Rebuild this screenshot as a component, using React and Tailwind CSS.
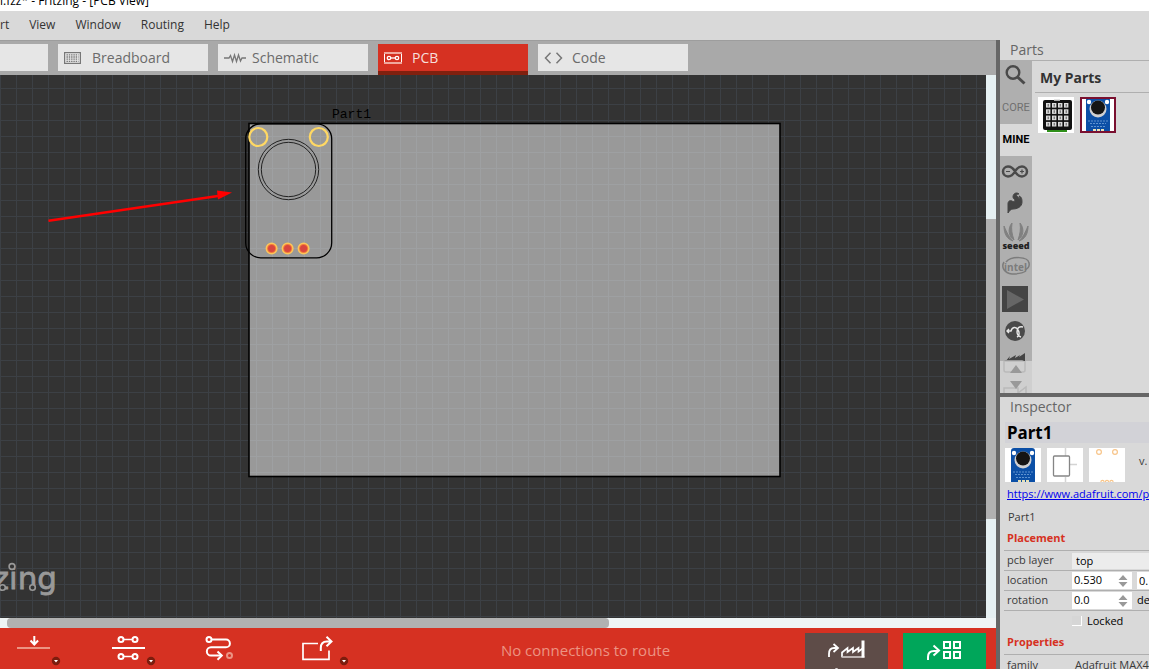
import React, { useState } from "react";

const menus = ["rt", "View", "Window", "Routing", "Help"];

const BreadboardIcon = () => (
  <svg width="17" height="12" viewBox="0 0 17 12" fill="none" stroke="#777" strokeWidth="1">
    <rect x="0.5" y="0.5" width="16" height="11" strokeWidth="1.4" />
    <path d="M2.5 2.8h12M2.5 5h12M2.5 7.2h12M2.5 9.4h12" strokeDasharray="1.4 0.9" strokeWidth="1.3" />
  </svg>
);

const SchematicIcon = () => (
  <svg width="22" height="12" viewBox="0 0 22 12" fill="none" stroke="#777" strokeWidth="1.3">
    <path d="M0 6h5l1.500-2.500 2 6 2-6.500 2 6.500 2-6.500 2 6 1.500-3H22" />
  </svg>
);

const PcbIcon = () => (
  <svg width="18" height="12" viewBox="0 0 18 12" fill="none" stroke="#fff">
    <path d="M0.500 0v12M17.500 0v12" strokeWidth="1" />
    <path d="M0 1h18M0 11h18" stroke="#f0a79d" strokeWidth="2" />
    <circle cx="5" cy="6" r="1.700" strokeWidth="1.300" />
    <circle cx="13" cy="6" r="1.700" strokeWidth="1.300" />
    <path d="M7 6h4" strokeWidth="1.300" />
  </svg>
);

const CodeIcon = () => (
  <svg width="19" height="12" viewBox="0 0 19 12" fill="none" stroke="#777" strokeWidth="1.500">
    <path d="M6.500 0.700L1.500 6l5 5.300M12.500 0.700L17.500 6l-5 5.300" />
  </svg>
);

const tabs = [
  { name: "Breadboard", icon: <BreadboardIcon /> },
  { name: "Schematic", icon: <SchematicIcon /> },
  { name: "PCB", icon: <PcbIcon /> },
  { name: "Code", icon: <CodeIcon /> },
];

const Caret = ({ x }) => (
  <>
    <circle cx={x} cy="33" r="4.200" fill="#7c1d0e" stroke="none" />
    <path d={`M${x - 2} 32h4l-2 2.500z`} fill="#fff" stroke="none" />
  </>
);

const tools = [
  {
    name: "View from above",
    icon: (
      <>
        <path d="M0 20h33" stroke="#ec9483" />
        <path d="M17.300 8v8M13.500 12.500l3.800 4 3.800-4" />
        <Caret x={39} />
      </>
    ),
  },
  {
    name: "Both layers",
    icon: (
      <>
        <path d="M0 20h33" />
        <path d="M12 11.500h8M12 28.500h8" strokeWidth="1.600" />
        <circle cx="9" cy="11.500" r="2.500" />
        <circle cx="23" cy="11.500" r="2.500" />
        <circle cx="9" cy="28.500" r="2.500" />
        <circle cx="23" cy="28.500" r="2.500" />
        <Caret x={39} />
      </>
    ),
  },
  {
    name: "Autoroute",
    icon: (
      <>
        <circle cx="2" cy="11.500" r="2.500" />
        <path d="M4.500 11.500h14.500a3.900 3.900 0 0 1 0 7.800H4a4.100 4.100 0 0 0 0 8.300h10.500" />
        <path d="M10.500 23.500l4.300 4.100-4.300 4.100" />
        <circle cx="22.500" cy="27.600" r="2.500" stroke="#ec9483" />
      </>
    ),
  },
  {
    name: "Export for PCB",
    icon: (
      <>
        <path d="M16 15.500H1v15.800h26V22.500" strokeWidth="1.700" />
        <path d="M18.800 23v-3c0-4 2-6.500 6-6.500h4.500M24.500 8.800l5 4.700-5 4.700" />
        <Caret x={42} />
      </>
    ),
  },
];

const MicPart = () => (
  <svg width="36" height="36" viewBox="0 0 36 36">
    <rect x="6" y="0" width="24" height="36" rx="3" fill="#0b4fa6" />
    <circle cx="9" cy="5" r="2.200" fill="#fff" />
    <circle cx="27" cy="5" r="2.200" fill="#fff" />
    <circle cx="18" cy="12" r="8.500" fill="#cfd0d2" />
    <circle cx="18" cy="10.500" r="7" fill="#151515" />
    <path d="M8 24h20M10 26.500h16M11 29.500h14" stroke="#5e92cf" strokeWidth="1" strokeDasharray="2 1" />
    <path d="M13 33h3M17 33h3M21 33h3" stroke="#e8e2b8" strokeWidth="2" />
  </svg>
);

const keys = [0, 1, 2, 3];

const KeypadPart = () => (
  <svg width="36" height="36" viewBox="0 0 36 36">
    <path d="M9 33.500h20" stroke="#2f8f1a" strokeWidth="3" />
    <rect x="5" y="3" width="29" height="30" rx="2" fill="#111" />
    <path d="M16 3h6" stroke="#ddd" strokeWidth="1.500" />
    {keys.map((row) =>
      keys.map((col) => (
        <g key={`${row}-${col}`}>
          <rect x={8 + col * 6} y={6 + row * 6.3} width="4.400" height="4.600" fill="#ddd" />
          <path d={`M${10.2 + col * 6} ${7 + row * 6.3}v2.600`} stroke="#555" />
        </g>
      ))
    )}
  </svg>
);

const SchematicPart = () => (
  <svg width="36" height="34" viewBox="0 0 36 34" fill="none" stroke="#d4d4d4">
    <path d="M18.500 0v8M18.500 29v5M23 16.500h7" strokeWidth="1.500" />
    <rect x="6.500" y="8" width="16" height="20" rx="1" stroke="#858585" strokeWidth="1.300" />
  </svg>
);

const PcbPart = () => (
  <svg width="36" height="34" viewBox="0 0 36 34" fill="none" stroke="#f8c58a" strokeWidth="1.200">
    <circle cx="10" cy="4" r="2.400" />
    <circle cx="26" cy="4" r="2.400" />
    <circle cx="13.500" cy="34" r="1.600" />
    <circle cx="18" cy="34" r="1.600" />
    <circle cx="22.500" cy="34" r="1.600" />
  </svg>
);

const BinIcon = ({ label, children }) => (
  <button aria-label={label} className="block h-8 w-8 shrink-0">
    <svg width="32" height="32" viewBox="0 0 32 32" fill="none">
      {children}
    </svg>
  </button>
);

const Bins = () => (
  <div className="relative flex w-8 shrink-0 flex-col overflow-hidden bg-[#afafaf]">
    <button aria-label="Search" className="h-[31px] w-8 shrink-0">
      <svg width="32" height="31" viewBox="0 0 32 31" fill="none" stroke="#4a4a4a">
        <circle cx="13" cy="11.500" r="6.300" strokeWidth="2.400" />
        <path d="M17.500 16l7 6.500" strokeWidth="3" />
      </svg>
    </button>
    <button className="flex h-8 w-8 shrink-0 items-center justify-center font-['Roboto',sans-serif] text-[11px] text-[#707070]">
      CORE
    </button>
    <button className="flex h-8 w-8 shrink-0 items-center justify-center bg-[#d9d9d9] font-['Roboto',sans-serif] text-[11px] font-bold text-black">
      MINE
    </button>
    <BinIcon label="Arduino">
      <path
        d="M15 15.500c-2-3.500-4-4.900-7-4.900a5 4.900 0 0 0 0 9.800c3 0 5-1.400 7-4.900s4-4.900 7-4.900a5 4.900 0 0 1 0 9.800c-3 0-5-1.400-7-4.900z"
        stroke="#4a4a4a"
        strokeWidth="2.500"
      />
      <path d="M6 15.500h4M20 15.500h4M22 13.500v4" stroke="#4a4a4a" strokeWidth="1.200" />
    </BinIcon>
    <BinIcon label="SparkFun">
      <path
        d="M8 25V16c0-3 2-4 4-3 1 1 3 1 3-1 0-1-2-1-2-3 0-4 4-5 6-3-3 0-3 2-1 3l1 2c1-1 1-1 0-3 3 1 3 4 3 6 0 5-5 7-9 7-2 0-3 1-5 4z"
        fill="#444"
        stroke="#444"
      />
    </BinIcon>
    <BinIcon label="Seeed">
      <path
        d="M4 6c0 8 3 13 9 15-4-4-6-8-9-15zM28 6c0 8-3 13-9 15 4-4 6-8 9-15zM12 3c-5 6-3 14 2 17-2-6-3-10-2-17zM20 3c5 6 3 14-2 17 2-6 3-10 2-17z"
        fill="#808080"
        stroke="#808080"
      />
      <text x="16" y="29" textAnchor="middle" fontSize="9" fontWeight="800" fontFamily="Open Sans, sans-serif" fill="#222">
        seeed
      </text>
    </BinIcon>
    <BinIcon label="Intel">
      <path d="M6 10c5-6 22-6 23 1 1 4-2 6-4 7M4 10c-3 5 0 11 8 12 6 0 11-1 14-3" stroke="#7c7c7c" strokeWidth="1.500" />
      <text x="15.500" y="19" textAnchor="middle" fontSize="10" fontWeight="700" fontFamily="Open Sans, sans-serif" fill="#7c7c7c">
        intel
      </text>
    </BinIcon>
    <BinIcon label="Picaxe">
      <rect x="2" y="2" width="26" height="26" fill="#444" />
      <path d="M7 6l17 9.500L7 25z" fill="#666" />
    </BinIcon>
    <BinIcon label="Parallax">
      <circle cx="15" cy="15" r="10" fill="#4a4a4a" />
      <path
        d="M7 15h4c1-4 5-5 7-1 2 3 1 6-1 7M23 11c-4-1-6 1-6 5 0 3 1 4 4 5M9 13l-2 2 2 2"
        stroke="#e8e8e8"
        strokeWidth="1.400"
      />
    </BinIcon>
    <BinIcon label="Factory">
      <path d="M5 14l5-6-1 3 7-4-1 3 5-3-1 2 6-4v9H5z" fill="#444" />
      <rect x="4" y="12" width="20" height="12" rx="2" fill="#999" />
    </BinIcon>
    <div className="absolute inset-x-0 bottom-0 flex flex-col items-center bg-[#cfcfcf]">
      <svg width="32" height="32" viewBox="0 0 32 32" fill="none">
        <path d="M4 0h21v9a2 2 0 0 1-2 2H6a2 2 0 0 1-2-2zM4 32v-5h14v5M18 32l8-6v6" stroke="#bababa" strokeWidth="1.500" />
        <path d="M16 4l6 8H10zM10 20h12l-6 8z" fill="#999" />
      </svg>
    </div>
  </div>
);

const Spinner = () => (
  <svg width="10" height="12" viewBox="0 0 10 12" className="mr-1 shrink-0">
    <path d="M5 0l4.500 5h-9zM0.500 7h9L5 12z" fill="#999" />
  </svg>
);

const Inspector = () => {
  const [location, setLocation] = useState("0.530");
  const [locationY, setLocationY] = useState("0.");
  const [rotation, setRotation] = useState("0.0");
  const [locked, setLocked] = useState(false);

  return (
    <div className="min-h-0 flex-1 overflow-hidden whitespace-nowrap pl-1 text-[11px] text-[#3a3a3a]">
      <h2 className="pl-[6px] text-sm leading-5 text-[#666]">Inspector</h2>
      <div className="ml-px mt-[5px] bg-[#d2d2d7] pl-[2px] font-['Noto_Sans',sans-serif] text-[17px] font-bold leading-[21px] text-black">
        Part1
      </div>
      <div className="ml-px mt-[5px] flex items-center gap-[6px]">
        <div className="h-[34px] w-9 shrink-0 overflow-hidden bg-white">
          <MicPart />
        </div>
        <div className="h-[34px] w-9 shrink-0 bg-white">
          <SchematicPart />
        </div>
        <div className="h-[34px] w-9 shrink-0 bg-white">
          <PcbPart />
        </div>
        <span className="pb-2 pl-2">v.</span>
      </div>
      <a href="#adafruit" className="mt-1 block pl-[3px] leading-4 text-[#0000ee] underline">
        https://www.adafruit.com/products/1713
      </a>
      <p className="mt-[7px] pl-1 leading-4">Part1</p>
      <h3 className="mt-[3px] border-b border-[#afafaf] pb-[2px] pl-[3px] font-bold leading-5 text-[#d63122]">
        Placement
      </h3>
      <div className="flex h-5 items-center border-b border-[#afafaf] pl-[3px]">
        <label htmlFor="layer" className="w-[65px] shrink-0">pcb layer</label>
        <select id="layer" className="h-4 min-w-0 flex-1 appearance-none bg-[#ececec] pl-1 leading-4 text-black">
          <option>top</option>
        </select>
      </div>
      <div className="flex h-5 items-center border-b border-[#afafaf] pl-[3px]">
        <label htmlFor="location" className="w-[65px] shrink-0">location</label>
        <div className="flex h-[17px] w-[60px] shrink-0 items-center bg-white">
          <input
            id="location"
            value={location}
            onChange={(e) => setLocation(e.target.value)}
            className="min-w-0 flex-1 pl-[2px] text-[11px] text-black outline-none"
          />
          <Spinner />
        </div>
        <input
          aria-label="location y"
          value={locationY}
          onChange={(e) => setLocationY(e.target.value)}
          className="ml-[5px] h-[17px] min-w-0 flex-1 bg-white pl-[2px] text-[11px] text-black outline-none"
        />
      </div>
      <div className="flex h-5 items-center border-b border-[#afafaf] pl-[3px]">
        <label htmlFor="rotation" className="w-[65px] shrink-0">rotation</label>
        <div className="flex h-[17px] w-[60px] shrink-0 items-center bg-white">
          <input
            id="rotation"
            value={rotation}
            onChange={(e) => setRotation(e.target.value)}
            className="min-w-0 flex-1 pl-[2px] text-[11px] text-black outline-none"
          />
          <Spinner />
        </div>
        <span className="ml-[5px] text-black">degrees</span>
      </div>
      <label className="flex h-5 items-center gap-[5px] pl-[68px] text-black">
        <input
          type="checkbox"
          checked={locked}
          onChange={() => setLocked(!locked)}
          className="h-[10px] w-[10px] appearance-none border-b border-r border-white bg-[#d6d6d6] checked:bg-[#666]"
        />
        Locked
      </label>
      <h3 className="mt-px border-b border-[#afafaf] pb-[2px] pl-[3px] font-bold leading-5 text-[#d63122]">Properties</h3>
      <div className="flex h-5 items-center pl-[3px]">
        <span className="w-[68px] shrink-0">family</span>
        <span>Adafruit MAX4466</span>
      </div>
    </div>
  );
};

const Board = () => (
  <svg className="absolute left-0 top-0 h-full w-full">
    {/* the board and the placed part */}
    <rect x="249" y="48.500" width="531" height="353" fill="#ffffff" fillOpacity="0.500" stroke="#000" strokeWidth="1.600" />
    <rect x="245.700" y="48.800" width="86" height="134" rx="15" fill="none" stroke="#000" strokeWidth="1.300" />
    <circle cx="288.500" cy="94.500" r="30.200" fill="none" stroke="#222" />
    <circle cx="288.500" cy="94.500" r="27.200" fill="none" stroke="#222" />
    <circle cx="258.300" cy="62" r="9" fill="none" stroke="#ffd863" strokeWidth="2.200" />
    <circle cx="318.800" cy="62" r="9" fill="none" stroke="#ffd863" strokeWidth="2.200" />
    {[271.6, 287.6, 303.6].map((x) => (
      <g key={x}>
        <circle cx={x} cy="173.500" r="5.300" fill="#f4793a" stroke="#fbc55a" strokeWidth="1.500" />
        <circle cx={x} cy="173.500" r="3.500" fill="#d9463f" />
      </g>
    ))}
    <text x="332" y="43" fontSize="13" fontFamily="Liberation Mono, monospace" fill="#000">
      Part1
    </text>
    {/* arrow */}
    <path d="M48.500 145.700L218 121" stroke="#f00" strokeWidth="2.600" />
    <path d="M217 115.500l15 2-14 7z" fill="#f00" />
    {/* fritzing logo */}
    <text
      x="57"
      y="514"
      textAnchor="end"
      fontSize="31"
      fontFamily="DejaVu Sans, sans-serif"
      fill="#999"
      stroke="#999"
      strokeWidth="0.800"
    >
      zing
    </text>
    <g fill="#333" stroke="#999" strokeWidth="1.600">
      <circle cx="12" cy="491.500" r="2.900" />
      <circle cx="2.500" cy="512.500" r="2.800" />
      <circle cx="32.500" cy="512.500" r="2.800" />
    </g>
  </svg>
);

const App = () => {
  const [activeTab, setActiveTab] = useState("PCB");

  return (
    <div className="flex h-screen flex-col overflow-hidden bg-[#d9d9d9] font-['Open_Sans',sans-serif]">
      <div className="flex h-[11px] shrink-0 items-end overflow-hidden bg-white">
        <span className="whitespace-pre pb-[2px] text-xs leading-4 text-black">l.fzz* - Fritzing - [PCB View]</span>
      </div>
      <nav className="flex h-[29px] shrink-0 items-center gap-5 pb-[2px] text-xs text-[#333]">
        {menus.map((menu) => (
          <button key={menu}>{menu}</button>
        ))}
      </nav>

      <div className="flex min-h-0 flex-1">
        <main className="flex min-w-0 flex-1 flex-col">
          <div className="flex h-[35px] shrink-0 gap-[10px] border-t border-[#9d9d9d] bg-[#a9a9a9] pt-[3px]">
            <div className="h-[27px] w-12 shrink-0 bg-[#e6e6e6]" />
            {tabs.map((tab) => (
              <button
                key={tab.name}
                onClick={() => setActiveTab(tab.name)}
                className={
                  activeTab === tab.name
                    ? "flex h-[31px] w-[150px] items-center border-b-4 border-[#80200f] bg-[#d63122] pl-[6px] text-sm text-[#f7dedb]"
                    : "flex h-[27px] w-[150px] items-center bg-[#e6e6e6] pl-[6px] text-sm text-[#6b6b6b]"
                }
              >
                <span className="flex w-7 shrink-0">{tab.icon}</span>
                {tab.name}
              </button>
            ))}
          </div>

          <div className="flex min-h-0 flex-1">
            <div className="relative min-w-0 flex-1 overflow-hidden bg-[#333] bg-[linear-gradient(to_right,#3c4045_1px,transparent_1px),linear-gradient(to_bottom,#3c4045_1px,transparent_1px)] bg-[size:16px_16px] bg-[position:0px_13px]">
              <Board />
            </div>
            <div className="w-[10px] shrink-0 bg-[#e6f0f2]">
              <div className="mt-36 h-[300px] bg-[#b1b1b1]" />
            </div>
          </div>
          <div className="flex h-[10px] shrink-0 bg-[#eff4f5]">
            <div className="ml-[7px] w-[602px] rounded-sm bg-[#b1b1b1]" />
          </div>

          <div className="flex h-[41px] shrink-0 bg-[#d63122] pl-[17px] pr-[10px]">
            <div className="flex gap-[51px]">
              {tools.map((tool) => (
                <button key={tool.name} aria-label={tool.name} className="w-11">
                  <svg
                    width="44"
                    height="41"
                    viewBox="0 0 44 41"
                    fill="none"
                    stroke="#fff"
                    strokeWidth="2"
                    className="overflow-visible"
                  >
                    {tool.icon}
                  </svg>
                </button>
              ))}
            </div>
            <p className="flex flex-1 items-center justify-center pl-5 pt-[3px] text-[15px] text-[#ec9483]">
              No connections to route
            </p>
            <button aria-label="Fabricate" className="mt-[5px] flex h-9 w-[83px] justify-center bg-[#5e4c48]">
              <svg width="83" height="36" viewBox="0 0 83 36" fill="none" stroke="#fff" strokeWidth="1.800">
                <path d="M24 24v-3c0-4 2-6 5-6h4M28.500 11l4.500 4-4.500 4" />
                <path d="M37 24v-4.500l5.500-4.500v4l5.500-4v4l5.500-4v3.500l4-3" strokeWidth="1.700" />
                <path d="M36.500 24h23" stroke="#cfc8c6" strokeWidth="1.700" />
                <path d="M58 7.500v17" strokeWidth="3" />
                <path d="M30.500 36l1-1 1 1" strokeWidth="1" />
              </svg>
            </button>
            <button aria-label="Share" className="ml-[15px] mt-[5px] flex h-9 w-[83px] justify-center bg-[#00a65a]">
              <svg width="83" height="36" viewBox="0 0 83 36" fill="none" stroke="#fff" strokeWidth="2">
                <path d="M25 27v-3c0-4 2-6 6-6h4M30.500 12.500l5.500 5-5.500 5" />
                <path d="M41 9h6v6h-6zM51 9h6v6h-6zM41 19h6v6h-6zM51 19h6v6h-6z" />
              </svg>
            </button>
          </div>
        </main>

        <aside className="flex w-[153px] shrink-0 flex-col border-l-4 border-[#666]">
          <div className="flex h-[353px] shrink-0 flex-col">
            <h2 className="h-[21px] shrink-0 border-b border-[#afafaf] pl-[10px] text-sm leading-5 text-[#666]">Parts</h2>
            <div className="flex min-h-0 flex-1">
              <Bins />
              <div className="min-w-0 flex-1 pl-[3px]">
                <h3 className="h-8 border-b border-[#afafaf] pl-[5px] pt-px font-['Noto_Sans',sans-serif] text-sm font-bold leading-8 text-[#333]">
                  My Parts
                </h3>
                <div className="flex gap-[6px] pl-[3px] pt-1">
                  <button aria-label="Keypad" className="h-9 w-9 bg-white">
                    <KeypadPart />
                  </button>
                  <button aria-label="Microphone" className="h-9 w-9 bg-white outline-2 -outline-offset-2 outline-[#7a1030]">
                    <MicPart />
                  </button>
                </div>
              </div>
            </div>
          </div>
          <div className="h-1 shrink-0 bg-[#666]" />
          <Inspector />
        </aside>
      </div>
    </div>
  );
};

export default App;
